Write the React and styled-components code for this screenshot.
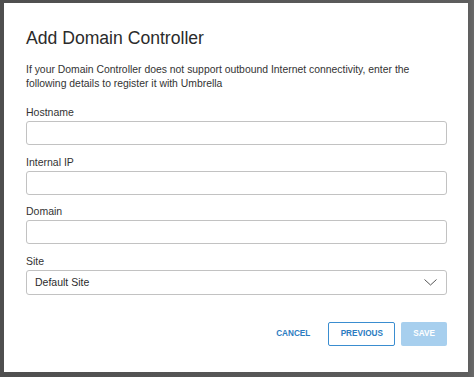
import styled, { createGlobalStyle } from 'styled-components';

const GlobalStyle = createGlobalStyle`
    html, body {
        margin: 0;
        padding: 0;
        background: #595959;
        font-family: "Liberation Sans", Arial, Helvetica, sans-serif;
    }
`;

const Backdrop = styled.div`
    width: 474px;
    height: 377px;
    padding: 3px 6px 5px 4px;
    box-sizing: border-box;
    background: linear-gradient(to right, #4f4f4f 0, #4f4f4f 4px, #5e5e5e 468px, #6a6a6a 100%);
`;

const Modal = styled.div`
    width: 464px;
    height: 369px;
    box-sizing: border-box;
    background: #fff;
    padding: 24px 21px 0 22px;
    display: flex;
    flex-direction: column;
`;

const Title = styled.h2`
    margin: 0;
    font-size: 17.6px;
    line-height: 22px;
    font-weight: 400;
    color: #2b2b2b;
`;

const Intro = styled.p`
    margin: 14px 0 14px;
    font-size: 10.4px;
    line-height: 14px;
    color: #333;
`;

const Fields = styled.div`
    display: flex;
    flex-direction: column;
    gap: 9.5px;
`;

const Field = styled.label`
    display: flex;
    flex-direction: column;
    gap: 2px;
`;

const Label = styled.span`
    font-size: 10.5px;
    line-height: 14px;
    color: #333;
`;

const Input = styled.input`
    height: 24px;
    box-sizing: border-box;
    border: 1px solid #c2c2c2;
    border-radius: 3px;
    padding: 0 8px;
    font: inherit;
    font-size: 10.5px;
    outline: none;
    background: #fff;
`;

const SelectBox = styled.div`
    height: 25px;
    box-sizing: border-box;
    border: 1px solid #c2c2c2;
    border-radius: 3px;
    padding: 0 9px 0 8px;
    display: flex;
    align-items: center;
    justify-content: space-between;
    font-size: 10.5px;
    color: #2b2b2b;
`;

const Footer = styled.div`
    margin-top: 27px;
    display: flex;
    justify-content: flex-end;
    align-items: center;
    gap: 6px;
`;

const Button = styled.button`
    height: 24px;
    min-width: ${(p) => (p.$w ? `${p.$w}px` : 'auto')};
    box-sizing: border-box;
    padding: 0 11px;
    border-radius: 2px;
    font-family: "Liberation Sans", Arial, sans-serif;
    font-size: 8.2px;
    font-weight: 700;
    text-transform: uppercase;
    cursor: pointer;
    border: 1px solid ${(p) => (p.$variant === 'outline' ? '#3a8dd0' : 'transparent')};
    background: ${(p) => (p.$variant === 'primary' ? '#a7cfee' : '#fff')};
    color: ${(p) => (p.$variant === 'primary' ? '#fff' : '#2c7cbf')};
`;

const Chevron = () => (
    <svg width="13" height="7" viewBox="0 0 13 7" fill="none">
        <path d="M0.5 0.5L6.5 6L12.5 0.5" stroke="#555" strokeWidth="1" />
    </svg>
);

const App = () => (
    <>
        <GlobalStyle />
        <Backdrop>
            <Modal>
                <Title>Add Domain Controller</Title>
                <Intro>
                    If your Domain Controller does not support outbound Internet connectivity, enter the
                    <br />
                    following details to register it with Umbrella
                </Intro>
                <Fields>
                    <Field>
                        <Label>Hostname</Label>
                        <Input type="text" />
                    </Field>
                    <Field>
                        <Label>Internal IP</Label>
                        <Input type="text" />
                    </Field>
                    <Field>
                        <Label>Domain</Label>
                        <Input type="text" />
                    </Field>
                    <Field>
                        <Label>Site</Label>
                        <SelectBox>
                            <span>Default Site</span>
                            <Chevron />
                        </SelectBox>
                    </Field>
                </Fields>
                <Footer>
                    <Button>Cancel</Button>
                    <Button $variant="outline" $w={67}>Previous</Button>
                    <Button $variant="primary" $w={45}>Save</Button>
                </Footer>
            </Modal>
        </Backdrop>
    </>
);

export default App;
